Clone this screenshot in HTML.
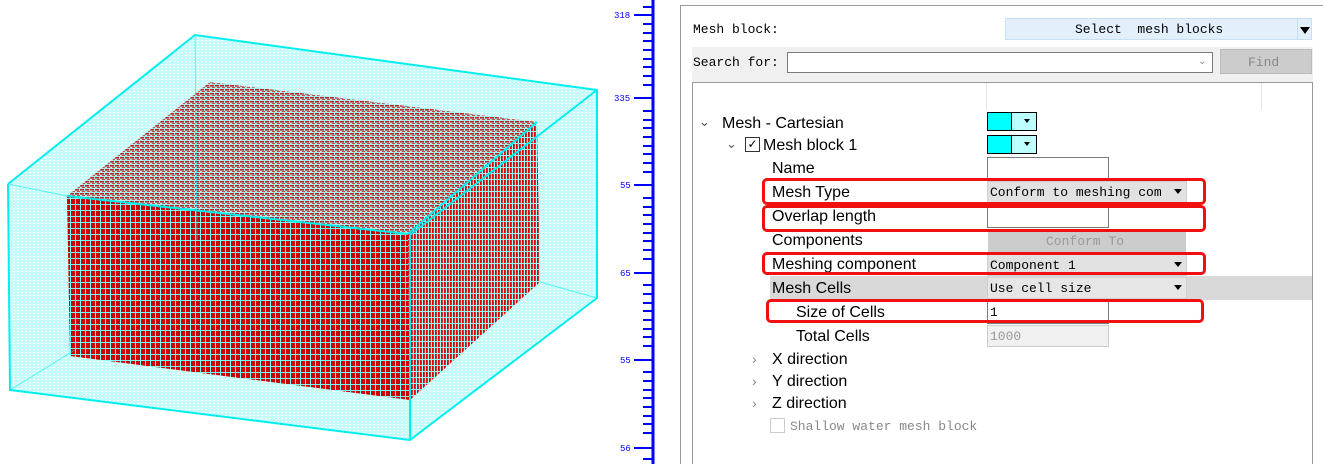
<!DOCTYPE html>
<html><head><meta charset="utf-8"><style>
*{margin:0;padding:0;box-sizing:border-box}
body{width:1323px;height:464px;background:#fff;position:relative;overflow:hidden;font-family:"Liberation Sans",sans-serif}
.a{position:absolute}
.m{font-family:"Liberation Mono","Noto Sans CJK SC",monospace;font-size:13px;color:#000}
.t{font-size:16px;color:#000;line-height:18px}
.box{position:absolute;background:#fff;border:1px solid #7a7a7a}
.combo{position:absolute;background:#e1e1e1;border:1px solid #cfcfcf}
.red{position:absolute;border:3px solid #f01010;border-radius:5px}
.arr{position:absolute;width:0;height:0;border-left:4px solid transparent;border-right:4px solid transparent;border-top:5px solid #000}
</style></head><body>
<svg class="a" style="left:0;top:0" width="660" height="464">
<defs>
<pattern id="pf" width="5" height="6" patternUnits="userSpaceOnUse"><rect width="5" height="6" fill="#7ff"/><rect x="1" y="1" width="4" height="5" fill="#c00"/></pattern>
<pattern id="pt" width="5" height="4" patternUnits="userSpaceOnUse"><rect width="5" height="4" fill="#aee"/><rect x="0" y="1" width="4" height="1.6" fill="#b22"/><rect x="2" y="3" width="3" height="1" fill="#c44"/></pattern>
<pattern id="pr" width="3" height="6" patternUnits="userSpaceOnUse"><rect width="3" height="6" fill="#9ff"/><rect x="0" y="0" width="1.8" height="5" fill="#d00"/></pattern>
<pattern id="pc" width="4" height="3" patternUnits="userSpaceOnUse"><rect width="4" height="3" fill="#c4fbfb"/><rect x="1" y="1" width="2" height="1" fill="#fff"/></pattern>
</defs>
<polygon points="195,35 597,90 597,298 410,440 10,390 8,184" fill="url(#pc)"/>
<polygon points="210,82 537,122 408,234 67,196" fill="url(#pt)"/>
<polygon points="537,122 540,282 410,400 408,234" fill="url(#pr)"/>
<polygon points="67,196 408,234 410,400 70,356" fill="url(#pf)"/>
<g stroke="#0ee" stroke-width="2" fill="none">
<polyline points="8,184 195,35 597,90 597,298 410,440 10,390 8,184"/>
<line x1="410" y1="235" x2="597" y2="90"/><line x1="410" y1="235" x2="410" y2="440"/>
<line x1="67" y1="196" x2="408" y2="234"/><line x1="408" y1="234" x2="537" y2="122"/>
</g>
<g stroke="#0ee" stroke-width="1" fill="none" opacity=".6"><line x1="195" y1="35" x2="197" y2="240"/><line x1="10" y1="390" x2="75" y2="350"/><line x1="540" y1="282" x2="597" y2="298"/><line x1="8" y1="184" x2="67" y2="196"/></g>
<line x1="653" y1="0" x2="653" y2="464" stroke="#00f" stroke-width="3"/>
<g stroke="#00f" stroke-width="2">
<path d="M643 7H653M643 24H653M643 33H653M643 41H653M643 50H653M643 59H653M643 67H653M643 76H653M643 85H653M643 111H653M643 120H653M643 128H653M643 137H653M643 146H653M643 154H653M643 163H653M643 172H653M643 198H653M643 207H653M643 215H653M643 224H653M643 233H653M643 241H653M643 250H653M643 259H653M643 285H653M643 294H653M643 303H653M643 311H653M643 320H653M643 329H653M643 337H653M643 346H653M643 372H653M643 381H653M643 390H653M643 398H653M643 407H653M643 416H653M643 424H653M643 433H653M643 459H653"/>
<path d="M634 15H653M634 98H653M634 185H653M634 273H653M634 360H653M634 448H653"/>
</g>
<g fill="#00f" font-size="9" font-family="Liberation Mono,monospace"><text x="614" y="18">318</text><text x="614" y="101">335</text><text x="620" y="188">55</text><text x="620" y="276">65</text><text x="620" y="363">55</text><text x="620" y="451">56</text></g>
<rect x="664" y="0" width="5" height="464" fill="#dbe8ef"/>
</svg>
<div class="a" style="left:680px;top:5px;width:643px;height:459px;border-left:1px solid #999;border-top:1px solid #999"></div>
<div class="a m" style="left:693px;top:22px">Mesh block:</div>
<div class="a" style="left:1005px;top:18px;width:307px;height:22px;background:#e3f0fb;border:1px solid #c8e0f4"></div>
<div class="a m" style="left:1075px;top:22px">Select&nbsp; mesh blocks</div>
<div class="a" style="left:1297px;top:18px;width:1px;height:22px;background:#c8e0f4"></div>
<div class="arr" style="left:1300px;top:27px;border-left-width:5px;border-right-width:5px;border-top-width:7px"></div>
<div class="a" style="left:692px;top:47px;width:621px;height:35px;background:#f0f0f0"></div>
<div class="a m" style="left:693px;top:55px">Search for:</div>
<div class="box" style="left:787px;top:52px;width:426px;height:21px"></div>
<div class="a" style="left:1198px;top:56px;color:#888;font-size:10px">&#8964;</div>
<div class="a" style="left:1220px;top:49px;width:92px;height:25px;background:#ccc;border:1px solid #bbb"></div>
<div class="a m" style="left:1248px;top:55px;color:#888">Find</div>
<div class="a" style="left:692px;top:82px;width:621px;height:382px;border:1px solid #999;border-bottom:none;background:#fff"></div>
<div class="a" style="left:986px;top:83px;width:1px;height:27px;background:#e5e5e5"></div>
<div class="a" style="left:1261px;top:83px;width:1px;height:27px;background:#e5e5e5"></div>
<div class="a t" style="left:699px;top:113px;color:#555;font-size:13px">&#8964;</div>
<div class="a t" style="left:722px;top:115px">Mesh - Cartesian</div>
<div class="a" style="left:987px;top:112px;width:50px;height:19px;border:1px solid #000;background:#bff"><div class="a" style="left:0;top:0;width:24px;height:17px;background:#0ff;border-right:1px solid #000"></div><div class="arr" style="left:36px;top:6px;border-left-width:3px;border-right-width:3px;border-top-width:4px"></div></div>
<div class="a t" style="left:726px;top:135px;color:#555;font-size:13px">&#8964;</div>
<div class="a" style="left:745px;top:137px;width:15px;height:15px;border:1px solid #333;font-size:12px;line-height:13px;text-align:center">&#10003;</div>
<div class="a t" style="left:763px;top:137px">Mesh block 1</div>
<div class="a" style="left:987px;top:135px;width:50px;height:19px;border:1px solid #000;background:#bff"><div class="a" style="left:0;top:0;width:24px;height:17px;background:#0ff;border-right:1px solid #000"></div><div class="arr" style="left:36px;top:6px;border-left-width:3px;border-right-width:3px;border-top-width:4px"></div></div>
<div class="a t" style="left:772px;top:160px">Name</div>
<div class="box" style="left:987px;top:157px;width:122px;height:23px"></div>
<div class="a t" style="left:772px;top:184px">Mesh Type</div>
<div class="combo" style="left:987px;top:181px;width:200px;height:22px"></div>
<div class="a m" style="left:990px;top:185px">Conform to meshing com</div>
<div class="arr" style="left:1174px;top:189px"></div>
<div class="a t" style="left:772px;top:208px">Overlap length</div>
<div class="box" style="left:987px;top:205px;width:122px;height:23px"></div>
<div class="a t" style="left:772px;top:232px">Components</div>
<div class="a" style="left:988px;top:231px;width:198px;height:22px;background:#ccc"></div>
<div class="a m" style="left:1046px;top:234px;color:#999">Conform To</div>
<div class="a t" style="left:772px;top:256px">Meshing component</div>
<div class="combo" style="left:987px;top:254px;width:200px;height:22px"></div>
<div class="a m" style="left:990px;top:258px">Component 1</div>
<div class="arr" style="left:1174px;top:262px"></div>
<div class="a" style="left:770px;top:276px;width:542px;height:24px;background:#d9d9d9"></div>
<div class="a t" style="left:772px;top:280px">Mesh Cells</div>
<div class="combo" style="left:987px;top:277px;width:200px;height:22px;background:#e6e6e6"></div>
<div class="a m" style="left:990px;top:281px">Use cell size</div>
<div class="arr" style="left:1174px;top:285px"></div>
<div class="a t" style="left:796px;top:304px">Size of Cells</div>
<div class="box" style="left:987px;top:301px;width:122px;height:23px"></div>
<div class="a m" style="left:990px;top:305px">1</div>
<div class="a t" style="left:796px;top:328px">Total Cells</div>
<div class="a" style="left:987px;top:325px;width:122px;height:22px;background:#f0f0f0;border:1px solid #ccc"></div>
<div class="a m" style="left:990px;top:329px;color:#999">1000</div>
<div class="red" style="left:762px;top:178px;width:444px;height:27px"></div>
<div class="red" style="left:762px;top:205px;width:444px;height:27px"></div>
<div class="red" style="left:762px;top:252px;width:444px;height:23px"></div>
<div class="red" style="left:766px;top:299px;width:438px;height:24px"></div>
<div class="a t" style="left:752px;top:350px;color:#888;font-size:14px">&#8250;</div>
<div class="a t" style="left:772px;top:351px">X direction</div>
<div class="a t" style="left:752px;top:372px;color:#888;font-size:14px">&#8250;</div>
<div class="a t" style="left:772px;top:373px">Y direction</div>
<div class="a t" style="left:752px;top:394px;color:#888;font-size:14px">&#8250;</div>
<div class="a t" style="left:772px;top:395px">Z direction</div>
<div class="a" style="left:770px;top:418px;width:15px;height:15px;border:1px solid #ccc"></div>
<div class="a m" style="left:790px;top:419px;color:#888">Shallow water mesh block</div>
</body></html>
